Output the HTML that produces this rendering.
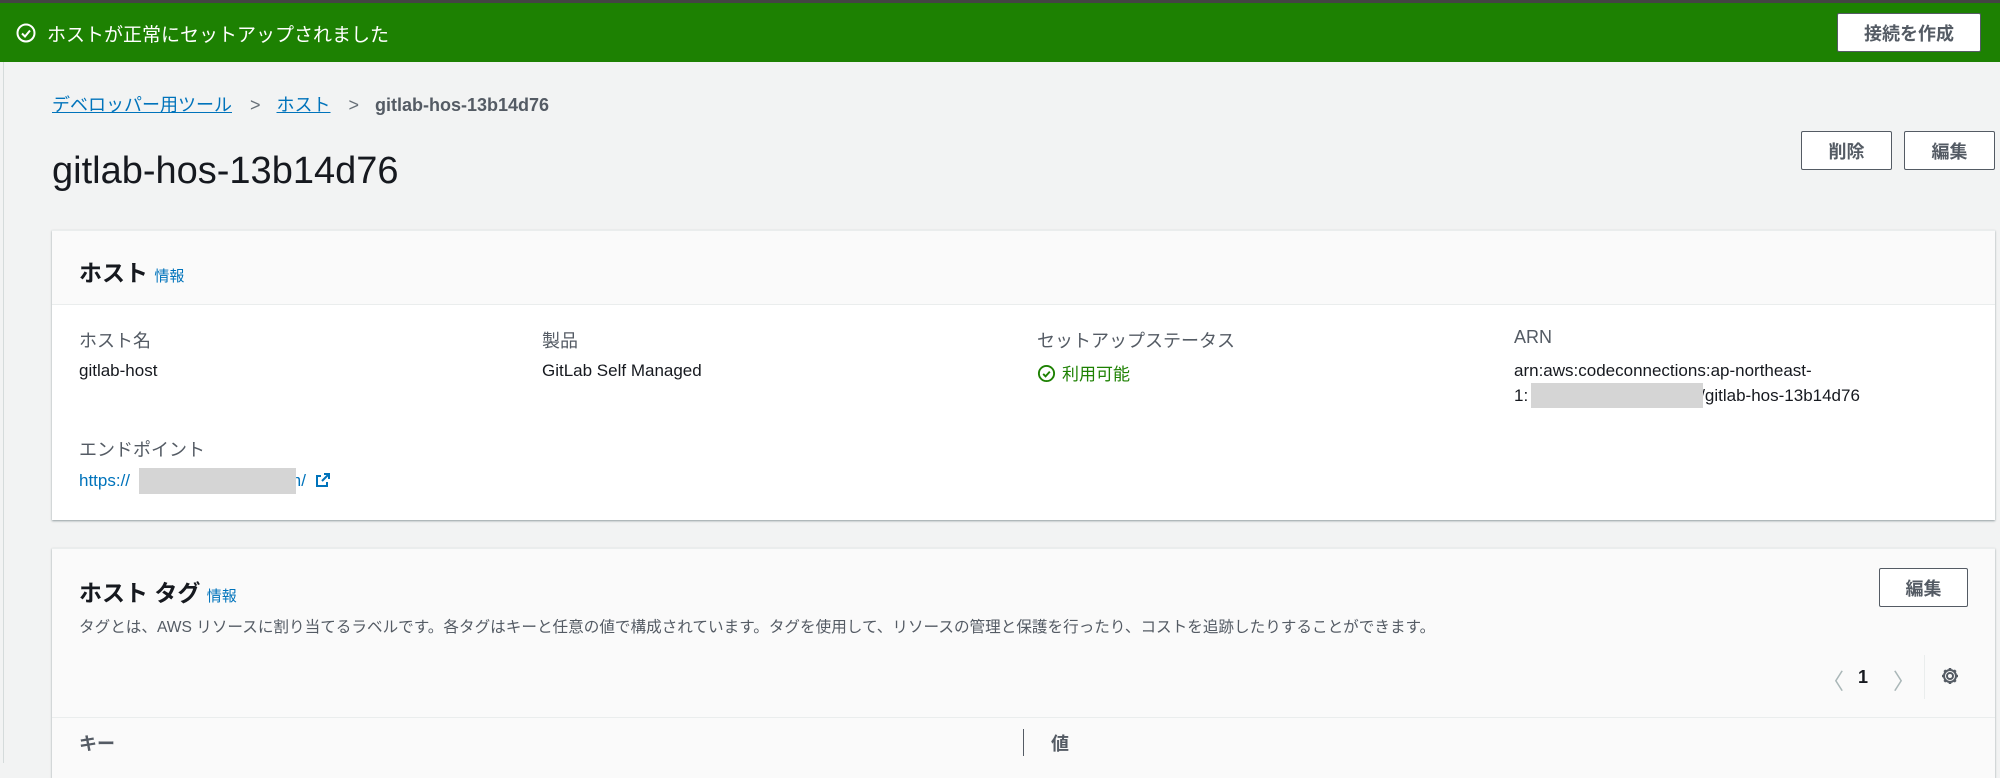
<!DOCTYPE html>
<html><head><meta charset="utf-8"><style>
*{margin:0;padding:0;box-sizing:border-box}
body{width:2000px;height:763px;overflow:hidden;background:#f2f3f3;font-family:"Liberation Sans","Noto Sans CJK JP",sans-serif;color:#16191f;position:relative}
.a{position:absolute;white-space:nowrap}
.btn{position:absolute;background:#fff;border:1px solid #545b64;border-radius:2px;font-weight:bold;font-size:18px;color:#545b64;display:flex;align-items:center;justify-content:center}
.lbl{font-size:18px;color:#545b64}
.val{font-size:17px;color:#16191f}
.link{color:#0073bb}
.red{position:absolute;background:#d5d5d5}
</style></head><body>
<div class="a" style="left:0;top:0;width:2000px;height:3px;background:#444"></div>
<div class="a" style="left:0;top:3px;width:2000px;height:59px;background:#1d8102"></div>
<svg class="a" style="left:15px;top:22px" width="22" height="22" viewBox="0 0 22 22"><circle cx="11" cy="11" r="8.5" fill="none" stroke="#fff" stroke-width="2"/><path d="M7 11.5l3 3 5-6" fill="none" stroke="#fff" stroke-width="2"/></svg>
<div class="a" style="left:47px;top:20px;font-size:19px;color:#fff">ホストが正常にセットアップされました</div>
<div class="btn" style="left:1837px;top:13px;width:144px;height:39px;border-color:#545b64;color:#545b64">接続を作成</div>
<div class="a" style="left:3px;top:62px;width:1px;height:701px;background:#d5dbdb"></div>

<div class="a" style="left:52px;top:91px;font-size:18px"><span class="link" style="text-decoration:underline">デベロッパー用ツール</span><span style="color:#687078;margin:0 16px 0 18px">&gt;</span><span class="link" style="text-decoration:underline">ホスト</span><span style="color:#687078;margin:0 16px 0 18px">&gt;</span><span style="color:#545b64;font-weight:bold">gitlab-hos-13b14d76</span></div>
<div class="a" style="left:52px;top:150px;font-size:38px;color:#16191f">gitlab-hos-13b14d76</div>
<div class="btn" style="left:1801px;top:131px;width:91px;height:39px">削除</div>
<div class="btn" style="left:1904px;top:131px;width:91px;height:39px">編集</div>

<div class="a" style="left:52px;top:230px;width:1943px;height:290px;background:#fff;box-shadow:0 1px 2px rgba(0,28,36,.4);border-top:1px solid #eaeded">
 <div style="height:74px;background:#fafafa;border-bottom:1px solid #eaeded"></div>
</div>
<div class="a" style="left:79px;top:254px;font-size:23px;font-weight:bold">ホスト <span class="link" style="font-size:15px;font-weight:normal">情報</span></div>
<div class="a lbl" style="left:79px;top:327px">ホスト名</div>
<div class="a val" style="left:79px;top:361px">gitlab-host</div>
<div class="a lbl" style="left:542px;top:327px">製品</div>
<div class="a val" style="left:542px;top:361px">GitLab Self Managed</div>
<div class="a lbl" style="left:1037px;top:327px">セットアップステータス</div>
<div class="a val" style="left:1037px;top:360px;color:#1d8102"><svg style="vertical-align:-3px;margin-right:6px" width="19" height="19" viewBox="0 0 20 20"><circle cx="10" cy="10" r="8" fill="none" stroke="#1d8102" stroke-width="2"/><path d="M6.5 10.5l2.5 2.5 4.5-5" fill="none" stroke="#1d8102" stroke-width="2"/></svg>利用可能</div>
<div class="a lbl" style="left:1514px;top:327px">ARN</div>
<div class="a val" style="left:1514px;top:361px">arn:aws:codeconnections:ap-northeast-</div>
<div class="a val" style="left:1514px;top:386px">1:<span style="display:inline-block;width:172px"></span>/gitlab-hos-13b14d76</div>
<div class="red" style="left:1531px;top:383px;width:172px;height:25px"></div>
<div class="a lbl" style="left:79px;top:436px">エンドポイント</div>
<div class="a val link" style="left:79px;top:471px">https://<span style="display:inline-block;width:157px"></span>m/ <svg style="vertical-align:-2px;margin-left:4px" width="16" height="16" viewBox="0 0 16 16"><path d="M9 2h5v5M14 2L7 9M12 10v4H2V4h4" fill="none" stroke="#0073bb" stroke-width="2"/></svg></div>
<div class="red" style="left:139px;top:468px;width:157px;height:26px"></div>

<div class="a" style="left:52px;top:548px;width:1943px;height:230px;background:#fafafa;box-shadow:0 1px 2px rgba(0,28,36,.4);border-top:1px solid #eaeded"></div>
<div class="a" style="left:52px;top:717px;width:1943px;height:1px;background:#eaeded"></div>
<div class="a" style="left:79px;top:574px;font-size:23px;font-weight:bold">ホスト タグ <span class="link" style="font-size:15px;font-weight:normal">情報</span></div>
<div class="a" style="left:79px;top:615px;font-size:15.6px;color:#545b64">タグとは、AWS リソースに割り当てるラベルです。各タグはキーと任意の値で構成されています。タグを使用して、リソースの管理と保護を行ったり、コストを追跡したりすることができます。</div>
<div class="btn" style="left:1879px;top:568px;width:89px;height:39px">編集</div>
<div class="a" style="left:1822px;top:664px;font-size:22px;color:#aab7b8">&#x2329;</div>
<div class="a" style="left:1858px;top:667px;font-size:18px;font-weight:bold">1</div>
<div class="a" style="left:1893px;top:664px;font-size:22px;color:#aab7b8">&#x232A;</div>
<div class="a" style="left:1924px;top:655px;width:1px;height:44px;background:#eaeded"></div>
<svg class="a" style="left:1940px;top:666px" width="20" height="20" viewBox="0 0 20 20"><circle cx="10" cy="10" r="3" fill="none" stroke="#545b64" stroke-width="2"/><path d="M10 2v3M10 15v3M2 10h3M15 10h3M4.3 4.3l2.1 2.1M13.6 13.6l2.1 2.1M4.3 15.7l2.1-2.1M13.6 6.4l2.1-2.1" stroke="#545b64" stroke-width="2.5"/><circle cx="10" cy="10" r="6" fill="none" stroke="#545b64" stroke-width="2"/></svg>
<div class="a" style="left:79px;top:730px;font-size:18px;font-weight:bold;color:#545b64">キー</div>
<div class="a" style="left:1023px;top:729px;width:1px;height:27px;background:#545b64"></div>
<div class="a" style="left:1051px;top:730px;font-size:18px;font-weight:bold;color:#545b64">値</div>
</body></html>
